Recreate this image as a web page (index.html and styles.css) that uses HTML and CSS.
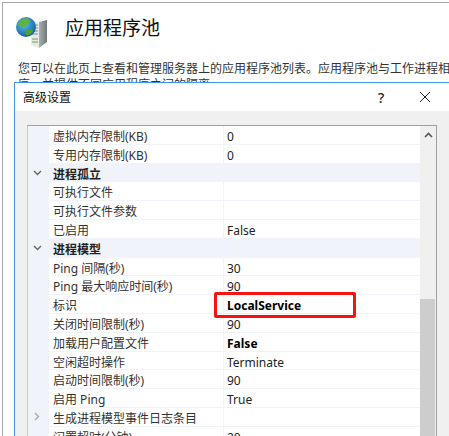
FILE: index.html
```html
<!DOCTYPE html>
<html lang="en">
<head>
    <meta charset="UTF-8">
    <meta name="viewport" content="width=device-width, initial-scale=1.0">
    <title>应用程序池</title>
    <link rel="stylesheet" href="styles.css">
</head>
<body>

<div class="page">
    <div class="page-head">
        <svg class="pool-icon" width="34" height="34" viewBox="0 0 34 34">
            <defs>
                <linearGradient id="tower" x1="0" x2="1" y1="0" y2="0">
                    <stop offset="0" stop-color="#a9b0b0"/>
                    <stop offset="1" stop-color="#6f7777"/>
                </linearGradient>
                <radialGradient id="globe" cx="0.4" cy="0.35" r="0.7">
                    <stop offset="0" stop-color="#5cc0ee"/>
                    <stop offset="1" stop-color="#0f5c9e"/>
                </radialGradient>
            </defs>
            <path d="M16 5 L24 7 V33 L16 30 Z" fill="#e6e9e7"/>
            <path d="M24 7 L32 5 V27 L24 33 Z" fill="url(#tower)"/>
            <path d="M17 10 H23 M17 13 H23 M17 16 H23 M17 19 H23" stroke="#7d8886" stroke-width="1"/>
            <path d="M17 24 H23 M17 27 H23" stroke="#6fa05a" stroke-width="1"/>
            <circle cx="11" cy="12" r="10" fill="url(#globe)"/>
            <path d="M6 5 C9 2 14 3 15 6 C14 9 11 8 10 12 C8 13 4 11 3 9 Z" fill="#5fb53c"/>
            <path d="M11 15 C14 14 18 14 18 16 C16 20 13 21 11 20 Z" fill="#4f9f36"/>
        </svg>
        <h1 class="page-title">应用程序池</h1>
    </div>
    <p class="page-desc">您可以在此页上查看和管理服务器上的应用程序池列表。应用程序池与工作进程相关联，包含一个或多个应用程<br>序，并提供不同应用程序之间的隔离。</p>
</div>

<div class="dialog">
    <div class="dialog-bar">
        <span class="dialog-title">高级设置</span>
        <span class="dialog-help">?</span>
        <svg class="dialog-close" width="12" height="12" viewBox="0 0 12 12">
            <path d="M1 1 L11 11 M11 1 L1 11" stroke="#222" stroke-width="1" fill="none"/>
        </svg>
    </div>
    <div class="dialog-body">
        <div class="grid">
            <div class="rows">
                <div class="row"><span class="gutter"></span><span class="name">虚拟内存限制(KB)</span><span class="value">0</span></div>
                <div class="row"><span class="gutter"></span><span class="name">专用内存限制(KB)</span><span class="value">0</span></div>
                <div class="row section">
                    <span class="gutter"><svg width="9" height="6" viewBox="0 0 9 6"><path d="M1 1 L4.5 4.5 L8 1" stroke="#666" stroke-width="1.4" fill="none"/></svg></span>
                    <span class="name">进程孤立</span>
                </div>
                <div class="row"><span class="gutter"></span><span class="name">可执行文件</span><span class="value"></span></div>
                <div class="row"><span class="gutter"></span><span class="name">可执行文件参数</span><span class="value"></span></div>
                <div class="row"><span class="gutter"></span><span class="name">已启用</span><span class="value">False</span></div>
                <div class="row section">
                    <span class="gutter"><svg width="9" height="6" viewBox="0 0 9 6"><path d="M1 1 L4.5 4.5 L8 1" stroke="#666" stroke-width="1.4" fill="none"/></svg></span>
                    <span class="name">进程模型</span>
                </div>
                <div class="row"><span class="gutter"></span><span class="name">Ping 间隔(秒)</span><span class="value">30</span></div>
                <div class="row"><span class="gutter"></span><span class="name">Ping 最大响应时间(秒)</span><span class="value">90</span></div>
                <div class="row"><span class="gutter"></span><span class="name">标识</span><span class="value strong">LocalService</span></div>
                <div class="row"><span class="gutter"></span><span class="name">关闭时间限制(秒)</span><span class="value">90</span></div>
                <div class="row"><span class="gutter"></span><span class="name">加载用户配置文件</span><span class="value strong">False</span></div>
                <div class="row"><span class="gutter"></span><span class="name">空闲超时操作</span><span class="value">Terminate</span></div>
                <div class="row"><span class="gutter"></span><span class="name">启动时间限制(秒)</span><span class="value">90</span></div>
                <div class="row"><span class="gutter"></span><span class="name">启用 Ping</span><span class="value">True</span></div>
                <div class="row">
                    <span class="gutter"><svg width="6" height="9" viewBox="0 0 6 9"><path d="M1 1 L4.5 4.5 L1 8" stroke="#a8a8a8" stroke-width="1.4" fill="none"/></svg></span>
                    <span class="name">生成进程模型事件日志条目</span><span class="value"></span>
                </div>
                <div class="row"><span class="gutter"></span><span class="name">闲置超时(分钟)</span><span class="value">20</span></div>
            </div>
            <div class="scrollbar">
                <div class="scroll-up">
                    <svg width="9" height="6" viewBox="0 0 9 6"><path d="M1 5 L4.5 1.5 L8 5" stroke="#555" stroke-width="1.6" fill="none"/></svg>
                </div>
                <div class="scroll-thumb"></div>
            </div>
        </div>
    </div>
    <div class="callout"></div>
</div>

</body>
</html>
```

FILE: styles.css
```css
html, body {
    margin: 0;
    height: 100%;
    overflow: hidden;
    background: #fff;
}
body {
    position: relative;
    font-family: "Noto Sans", "Noto Sans CJK SC", sans-serif;
    font-size: 12px;
    color: #222;
}
.page {
    margin: 2px 0 0 2px;
    border-top: 1px solid #a9a9a9;
    border-left: 1px solid #a9a9a9;
    height: 434px;
    box-sizing: border-box;
    padding: 10px 0 0 12px;
    overflow: hidden;
}
.page-head {
    display: flex;
    align-items: flex-start;
    height: 30px;
}
.pool-icon {
    margin: 2px 0 0 0;
}
.page-title {
    margin: 0 0 0 16px;
    font-size: 19px;
    font-weight: 400;
    line-height: 30px;
    color: #111;
}
.page-desc {
    margin: 18px 0 0 3px;
    white-space: nowrap;
    overflow: hidden;
    line-height: 16px;
    color: #333;
}

/* dialog sits over the page like a window */
.dialog {
    position: absolute;
    left: 14px;
    top: 82px;
    width: 435px;
    height: 354px;
    box-sizing: border-box;
    background: #f0f0f0;
    border-top: 1px solid #3a9ae0;
    border-left: 1px solid #3a9ae0;
}
.dialog-bar {
    display: flex;
    align-items: center;
    height: 28px;
    background: #fff;
    padding: 0 0 0 8px;
}
.dialog-title {
    flex: 1;
    color: #111;
}
.dialog-help {
    width: 41px;
    font-size: 14px;
    font-weight: 500;
    color: #222;
}
.dialog-close {
    margin-right: 18px;
}
.dialog-body {
    padding: 14px 12px 0 12px;
}
.grid {
    display: flex;
    width: 410px;
    height: 320px;
    box-sizing: border-box;
    border-top: 1px solid #a0a0a0;
    border-left: 1px solid #c8c8c8;
    border-right: 1px solid #a0a0a0;
    background: #fff;
    overflow: hidden;
}
.rows {
    flex: 1;
}
.row {
    display: flex;
    height: 18.8px;
    line-height: 17px;
    box-sizing: border-box;
    border-bottom: 1px solid #f0f3f9;
}
.gutter {
    width: 21px;
    flex: none;
    display: flex;
    align-items: center;
    justify-content: center;
    background: #f0f3f9;
    padding-right: 3px;
    box-sizing: border-box;
}
.name {
    width: 175px;
    flex: none;
    padding: 2px 0 0 4px;
    box-sizing: border-box;
    white-space: nowrap;
    color: #333;
    border-right: 1px solid #f0f3f9;
}
.value {
    padding: 2px 0 0 3px;
    color: #222;
}
.strong {
    font-weight: 700;
    color: #000;
}
.section {
    background: #f0f3f9;
    border-bottom: none;
}
.section .name {
    font-weight: 700;
    color: #222;
    border-right: none;
}
.scrollbar {
    width: 16px;
    flex: none;
    background: #f0f0f0;
}
.scroll-up {
    height: 17px;
    display: flex;
    align-items: center;
    justify-content: center;
}
.scroll-thumb {
    margin: 156px 1px 0 0;
    height: 160px;
    background: #cdcdcd;
}
.callout {
    position: absolute;
    left: 199px;
    top: 209px;
    width: 142px;
    height: 26px;
    box-sizing: border-box;
    border: 3px solid #f5140f;
    border-radius: 2px;
}
```
